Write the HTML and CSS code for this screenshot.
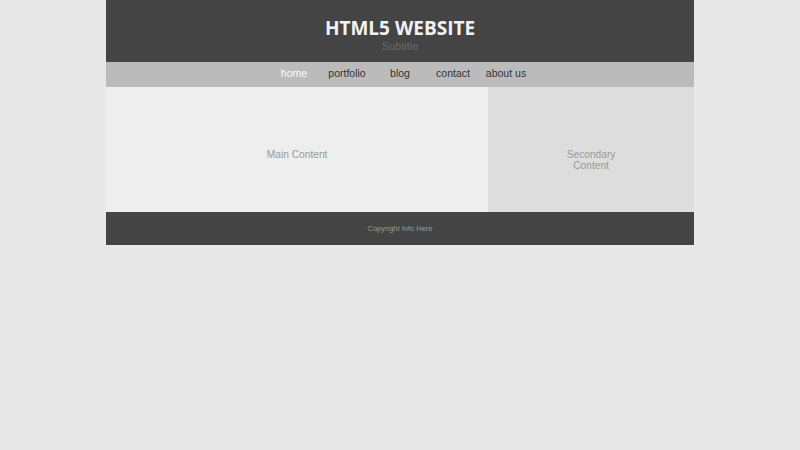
FILE: index.html
```html
<!DOCTYPE html>
<html>
<head>
<meta charset="utf-8">
<link rel="stylesheet" href="styles.css">
</head>
<body>
<div class="page">
  <header class="masthead">
    <h1 class="title">HTML5 WEBSITE</h1>
    <div class="subtitle">Subtitle</div>
  </header>
  <nav class="nav">
    <a class="nav-item active">home</a>
    <a class="nav-item">portfolio</a>
    <a class="nav-item">blog</a>
    <a class="nav-item">contact</a>
    <a class="nav-item">about us</a>
  </nav>
  <div class="content">
    <main class="main">Main Content</main>
    <aside class="side"><span class="side-text">Secondary Content</span></aside>
  </div>
  <footer class="footer">Copyright Info Here</footer>
</div>
</body>
</html>
```
FILE: styles.css
```css
html, body { margin: 0; padding: 0; }
body {
  background: #e8e8e8;
  font-family: "Liberation Sans", Arial, sans-serif;
}
.page {
  width: 588px;
  margin: 0 auto;
}
.masthead {
  background: #444444;
  height: 62px;
  box-sizing: border-box;
  padding-top: 16px;
  text-align: center;
}
.title {
  margin: 0;
  font-family: "Open Sans", sans-serif;
  font-weight: 700;
  font-size: 19px;
  line-height: 24px;
  color: #f2f2f2;
}
.subtitle {
  font-size: 11px;
  line-height: 13px;
  color: #6a6a6a;
}
.nav {
  background: #bbbbbb;
  height: 25px;
  box-sizing: border-box;
  padding-bottom: 3px;
  display: flex;
  justify-content: center;
  align-items: center;
}
.nav-item {
  width: 53px;
  text-align: center;
  font-size: 10.5px;
  color: #333;
}
.nav-item.active { color: #fafafa; }
.content {
  display: flex;
  height: 125px;
}
.main {
  width: 65%;
  background: #eeeeee;
  box-sizing: border-box;
  padding-top: 62px;
  text-align: center;
  font-size: 10.2px;
  color: #999;
}
.side {
  width: 35%;
  background: #dddddd;
  box-sizing: border-box;
  padding-top: 63px;
  text-align: center;
  font-size: 10.2px;
  line-height: 10.5px;
  color: #999;
}
.side-text {
  display: inline-block;
  width: 60px;
}
.footer {
  background: #444444;
  height: 33px;
  display: flex;
  align-items: center;
  justify-content: center;
  font-size: 7.5px;
  color: #9a9a9a;
}
```
